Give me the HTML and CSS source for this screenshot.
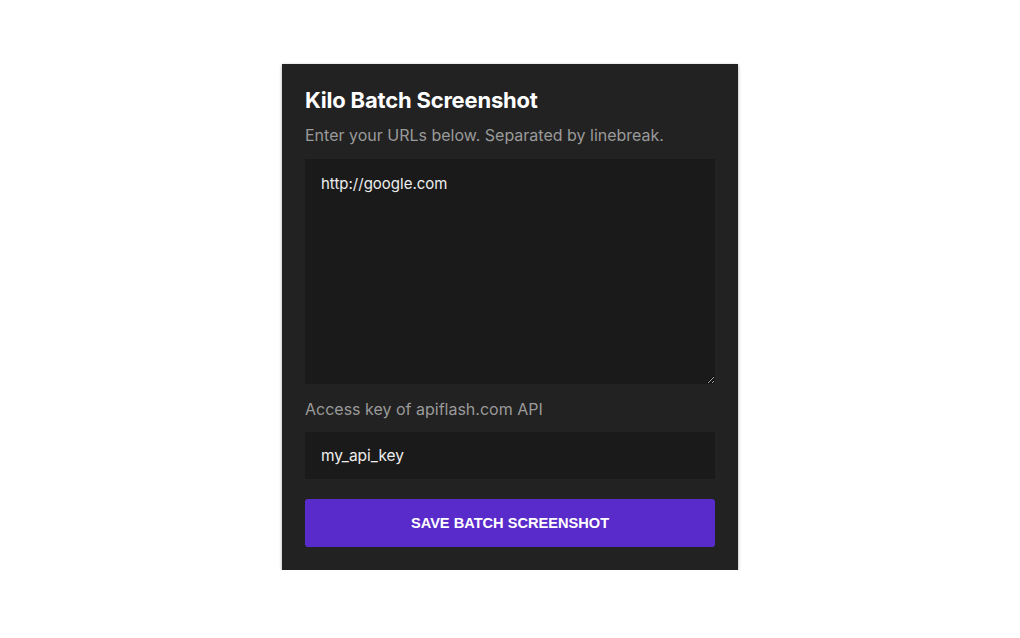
FILE: index.html
```html
<!DOCTYPE html>
<html lang="en">
<head>
    <meta charset="UTF-8">
    <meta name="viewport" content="width=device-width, initial-scale=1.0">
    <title>Kilo Batch Screenshot</title>
    <link rel="stylesheet" href="styles.css">
</head>
<body>

    <div class="popup">
        <h1>Kilo Batch Screenshot</h1>
        <p class="hint">Enter your URLs below. Separated by linebreak.</p>
        <textarea id="urls" aria-label="URLs">http://google.com</textarea>
        <label class="hint" for="api-key">Access key of apiflash.com API</label>
        <input type="text" id="api-key" value="my_api_key">
        <button id="save-button">Save batch screenshot</button>
    </div>

</body>
</html>
```

FILE: styles.css
```css
body {
    font-family: Inter, "Liberation Sans", Arial, sans-serif;
    background-color: #fff;
    margin: 0;
    padding: 0;
    display: flex;
    justify-content: center;
}
.popup {
    width: 410px;
    margin-top: 64px;
    padding: 24px 23px 23px;
    background-color: #222;
    box-shadow: 0 1px 3px rgba(0, 0, 0, 0.35);
    display: flex;
    flex-direction: column;
}
h1 {
    margin: 0;
    font-size: 22px;
    line-height: 24px;
    font-weight: 700;
    color: #fff;
    letter-spacing: -0.2px;
}
.hint {
    margin: 0;
    font-size: 16px;
    line-height: 22px;
    color: #9a9a9a;
}
.popup p.hint {
    margin-top: 12px;
}
textarea {
    margin-top: 13px;
    height: 225px;
    box-sizing: border-box;
    padding: 16px 16px;
    background-color: #1a1a1a;
    border: none;
    outline: none;
    color: #eee;
    font-family: inherit;
    font-size: 15px;
    line-height: 18px;
    resize: vertical;
}
label.hint {
    margin-top: 14px;
}
input[type="text"] {
    margin-top: 12px;
    height: 47px;
    box-sizing: border-box;
    padding: 0 16px;
    background-color: #1a1a1a;
    border: none;
    outline: none;
    color: #eee;
    font-family: inherit;
    font-size: 15.5px;
}
button {
    margin-top: 20px;
    height: 48px;
    border: none;
    border-radius: 3px;
    background-color: #5a2bcb;
    color: #fff;
    font-family: "Liberation Sans", Arial, sans-serif;
    font-weight: 700;
    font-size: 14.6px;
    text-transform: uppercase;
    cursor: pointer;
}
button:hover {
    background-color: #6535dd;
}
```
